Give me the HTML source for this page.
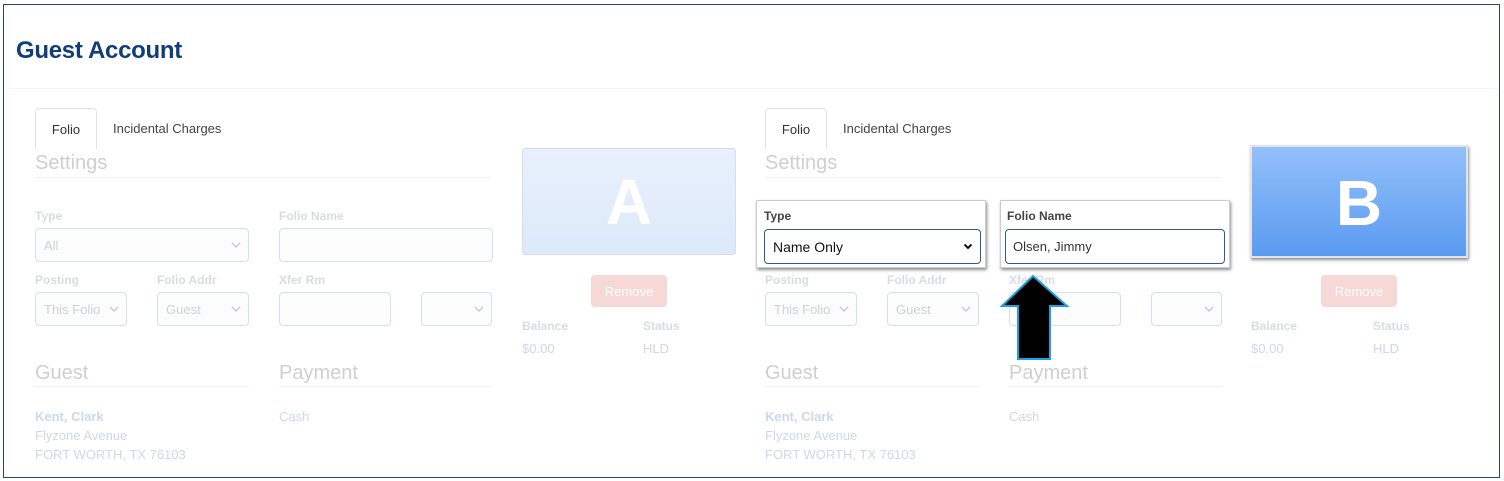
<!DOCTYPE html>
<html><head><meta charset="utf-8"><style>
*{margin:0;padding:0;box-sizing:border-box}
body{width:1504px;height:481px;background:#fff;position:relative;overflow:hidden;font-family:"Liberation Sans",sans-serif}
.a{position:absolute}
.frame{left:3px;top:4px;width:1497px;height:474px;border:1.5px solid #1d4a7e}
h1{position:absolute;left:16px;top:37px;font-size:24px;font-weight:bold;color:#0f3e78;letter-spacing:-0.3px}
.sep{left:5px;top:88px;width:1493px;height:1px;background:#f4f4f4}
.tab{border:1px solid #e2e2e2;border-bottom:none;border-radius:4px 4px 0 0;height:41px;width:62px;font-size:13px;color:#333;padding-top:13px;text-align:center}
.tab2{font-size:13px;color:#444}
.h2{font-size:20px;color:#cfcfcf}
.ln{height:1px;background:#f0f0f0}
.lb{font-size:12px;color:#d8dce2;font-weight:bold}
.in{border:1px solid #d7e0ee;border-radius:4px;background:#fcfcfd;height:34px;font-size:13px;color:#ccd1d8;padding:9px 0 0 8px}
.cv{position:absolute;right:7px;top:13px;width:10px;height:7px}
.tx{font-size:13px;color:#cdd8ea}
.rm{background:#f6d8d6;border-radius:4px;color:#fff;font-size:13px;text-align:center;padding-top:9px;width:76px;height:32px}
</style></head><body>
<div class="a frame"></div>
<h1>Guest Account</h1>
<div class="a sep"></div>

<!-- Panel A -->
<div class="a tab" style="left:35px;top:108px">Folio</div>
<div class="a tab2" style="left:113px;top:121px">Incidental Charges</div>
<div class="a h2" style="left:35px;top:152px">Settings</div>
<div class="a ln" style="left:35px;top:177px;width:456px"></div>
<div class="a lb" style="left:35px;top:209px">Type</div>
<div class="a lb" style="left:279px;top:209px">Folio Name</div>
<div class="a in" style="left:35px;top:228px;width:214px">All<svg class="cv" viewBox="0 0 10 7"><path d="M1 1L5 5L9 1" fill="none" stroke="#c5cad3" stroke-width="1.5"/></svg></div>
<div class="a in" style="left:279px;top:228px;width:214px"></div>
<div class="a lb" style="left:35px;top:273px">Posting</div>
<div class="a lb" style="left:157px;top:273px">Folio Addr</div>
<div class="a lb" style="left:279px;top:273px">Xfer Rm</div>
<div class="a in" style="left:35px;top:292px;width:92px">This Folio<svg class="cv" viewBox="0 0 10 7"><path d="M1 1L5 5L9 1" fill="none" stroke="#c5cad3" stroke-width="1.5"/></svg></div>
<div class="a in" style="left:157px;top:292px;width:92px">Guest<svg class="cv" viewBox="0 0 10 7"><path d="M1 1L5 5L9 1" fill="none" stroke="#c5cad3" stroke-width="1.5"/></svg></div>
<div class="a in" style="left:279px;top:292px;width:112px"></div>
<div class="a in" style="left:421px;top:292px;width:71px"><svg class="cv" viewBox="0 0 10 7"><path d="M1 1L5 5L9 1" fill="none" stroke="#c5cad3" stroke-width="1.5"/></svg></div>
<div class="a" style="left:522px;top:148px;width:214px;height:107px;background:linear-gradient(#e8f0fc,#dde9fa);border:1px solid #d3dff0;border-radius:3px;color:#fff;font-size:64px;font-weight:bold;text-align:center;line-height:107px">A</div>
<div class="a rm" style="left:591px;top:275px">Remove</div>
<div class="a lb" style="left:522px;top:319px">Balance</div>
<div class="a lb" style="left:643px;top:319px">Status</div>
<div class="a tx" style="left:522px;top:341px">$0.00</div>
<div class="a tx" style="left:643px;top:341px">HLD</div>
<div class="a h2" style="left:35px;top:362px">Guest</div>
<div class="a ln" style="left:35px;top:386px;width:214px"></div>
<div class="a h2" style="left:279px;top:362px">Payment</div>
<div class="a ln" style="left:279px;top:386px;width:212px"></div>
<div class="a tx" style="left:35px;top:409px;font-weight:bold">Kent, Clark</div>
<div class="a tx" style="left:35px;top:428px">Flyzone Avenue</div>
<div class="a tx" style="left:35px;top:447px">FORT WORTH, TX 76103</div>
<div class="a tx" style="left:279px;top:409px">Cash</div>

<!-- Panel B -->
<div class="a tab" style="left:765px;top:108px">Folio</div>
<div class="a tab2" style="left:843px;top:121px">Incidental Charges</div>
<div class="a h2" style="left:765px;top:152px">Settings</div>
<div class="a ln" style="left:765px;top:177px;width:456px"></div>
<div class="a lb" style="left:765px;top:273px">Posting</div>
<div class="a lb" style="left:887px;top:273px">Folio Addr</div>
<div class="a lb" style="left:1009px;top:273px">Xfer Rm</div>
<div class="a in" style="left:765px;top:292px;width:92px">This Folio<svg class="cv" viewBox="0 0 10 7"><path d="M1 1L5 5L9 1" fill="none" stroke="#c5cad3" stroke-width="1.5"/></svg></div>
<div class="a in" style="left:887px;top:292px;width:92px">Guest<svg class="cv" viewBox="0 0 10 7"><path d="M1 1L5 5L9 1" fill="none" stroke="#c5cad3" stroke-width="1.5"/></svg></div>
<div class="a in" style="left:1009px;top:292px;width:112px"></div>
<div class="a in" style="left:1151px;top:292px;width:71px"><svg class="cv" viewBox="0 0 10 7"><path d="M1 1L5 5L9 1" fill="none" stroke="#c5cad3" stroke-width="1.5"/></svg></div>

<div class="a" style="left:756px;top:200px;width:230px;height:68px;background:#fff;border:1px solid #ccc;box-shadow:1px 2px 3px rgba(0,0,0,.45)">
  <div class="a" style="left:7px;top:8px;font-size:12px;font-weight:bold;color:#444">Type</div>
  <div class="a" style="left:7px;top:28px;width:217px;height:35px;border:1.5px solid #2d5a92;border-radius:4px;font-size:14px;color:#111;padding:9px 0 0 8px">Name Only<svg class="cv" style="top:13px" viewBox="0 0 10 7"><path d="M1.5 1.5L5 5L8.5 1.5" fill="none" stroke="#111" stroke-width="2"/></svg></div>
</div>
<div class="a" style="left:1000px;top:200px;width:230px;height:68px;background:#fff;border:1px solid #ccc;box-shadow:1px 2px 3px rgba(0,0,0,.45)">
  <div class="a" style="left:6px;top:8px;font-size:12px;font-weight:bold;color:#444">Folio Name</div>
  <div class="a" style="left:4px;top:28px;width:220px;height:35px;border:1.5px solid #2d5a92;border-radius:4px;font-size:13px;color:#333;padding:9px 0 0 7px">Olsen, Jimmy</div>
</div>

<div class="a" style="left:1250px;top:145px;width:218px;height:113px;background:linear-gradient(#93c0fa,#5a9bf1);border:2px solid #e4e4e4;box-shadow:1px 2px 3px rgba(0,0,0,.45);color:#fff;font-size:64px;font-weight:bold;text-align:center;line-height:112px">B</div>
<div class="a rm" style="left:1321px;top:275px">Remove</div>
<div class="a lb" style="left:1251px;top:319px">Balance</div>
<div class="a lb" style="left:1373px;top:319px">Status</div>
<div class="a tx" style="left:1251px;top:341px">$0.00</div>
<div class="a tx" style="left:1373px;top:341px">HLD</div>
<div class="a h2" style="left:765px;top:362px">Guest</div>
<div class="a ln" style="left:765px;top:386px;width:214px"></div>
<div class="a h2" style="left:1009px;top:362px">Payment</div>
<div class="a ln" style="left:1009px;top:386px;width:212px"></div>
<div class="a tx" style="left:765px;top:409px;font-weight:bold">Kent, Clark</div>
<div class="a tx" style="left:765px;top:428px">Flyzone Avenue</div>
<div class="a tx" style="left:765px;top:447px">FORT WORTH, TX 76103</div>
<div class="a tx" style="left:1009px;top:409px">Cash</div>

<svg class="a" style="left:0;top:0" width="1504" height="481">
<path d="M1033 276 L1067 306 L1050 306 L1050 359 L1018 359 L1018 306 L1002 306 Z" fill="#000" stroke="#1ea0e0" stroke-width="2" stroke-linejoin="miter"/>
</svg>
</body></html>
